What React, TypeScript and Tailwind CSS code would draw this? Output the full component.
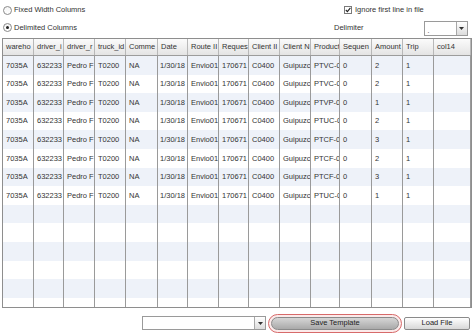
import React from 'react';

const columns = [
  { name: 'wareho', w: 31 },
  { name: 'driver_i', w: 30 },
  { name: 'driver_r', w: 31 },
  { name: 'truck_id', w: 31 },
  { name: 'Comme', w: 32 },
  { name: 'Date', w: 30 },
  { name: 'Route II', w: 31 },
  { name: 'Reques', w: 30 },
  { name: 'Client II', w: 31 },
  { name: 'Client N', w: 31 },
  { name: 'Product', w: 29 },
  { name: 'Sequen', w: 32 },
  { name: 'Amount', w: 31 },
  { name: 'Trip', w: 31 },
  { name: 'col14', w: 37 },
];

const products = [
  ['PTVC-0', '2'],
  ['PTVC-0', '2'],
  ['PTVP-0', '1'],
  ['PTUC-0', '2'],
  ['PTCF-0', '3'],
  ['PTCF-0', '2'],
  ['PTCF-0', '3'],
  ['PTUC-0', '1'],
];

const rows = products.map(([product, amount]) => [
  '7035A', '632233', 'Pedro F', 'T0200', 'NA', '1/30/18', 'Envio01', '170671',
  'C0400', 'Guipuzc', product, '0', amount, '1', '',
]);

function Radio({ checked }: { checked?: boolean }) {
  return (
    <span className="w-[9px] h-[9px] rounded-full border border-[#8a8a8a] bg-gradient-to-b from-[#f4f4f4] to-white flex items-center justify-center">
      {checked && <span className="w-[3px] h-[3px] rounded-full bg-[#222]" />}
    </span>
  );
}

function Arrow() {
  return (
    <span className="w-[11px] self-stretch border-l border-[#a8a8a8] bg-gradient-to-b from-white to-[#dcdcdc] flex items-center justify-center">
      <svg width="5" height="3" viewBox="0 0 5 3">
        <path d="M0 0 L5 0 L2.5 3 Z" fill="#333" />
      </svg>
    </span>
  );
}

export default function App() {
  const total = 15;

  return (
    <div className="w-[474px] h-[335px] bg-white overflow-hidden font-['Liberation_Sans',Arial,sans-serif] text-[7.5px] text-[#333] leading-none">
      <div className="flex items-center h-[16px] mt-[2px]">
        <div className="flex-1 flex items-center gap-[2px] pl-[3px]">
          <Radio />
          <span>Fixed Width Columns</span>
        </div>
        <div className="w-[130px] flex items-center gap-[3px]">
          <span className="w-[8px] h-[8px] border border-[#7a7a7a] bg-white flex items-center justify-center">
            <svg width="6" height="6" viewBox="0 0 6 6">
              <path d="M0.8 3 L2.4 4.6 L5.4 0.8" stroke="#222" strokeWidth="1.1" fill="none" />
            </svg>
          </span>
          <span>Ignore first line in file</span>
        </div>
      </div>

      <div className="flex items-center h-[19px]">
        <div className="flex-1 flex items-center gap-[2px] pl-[3px]">
          <Radio checked />
          <span>Delimited Columns</span>
        </div>
        <div className="w-[140px] flex items-start h-full">
          <span className="mt-[6px]">Delimiter</span>
          <div className="ml-[60px] mt-[3px] w-[44px] h-[15px] border border-[#9a9a9a] bg-white flex">
            <span className="flex-1 pl-[3px] pt-[5px] text-[7px]">.</span>
            <Arrow />
          </div>
        </div>
      </div>

      <div className="mx-[2px] mt-[1px] h-[270px] border border-[#8e8e8e] overflow-hidden">
        <div className="flex h-[17px] border-b border-[#9c9c9c] bg-gradient-to-b from-[#fbfbfb] to-[#e4e4e4]">
          {columns.map((c, i) => (
            <div
              key={i}
              style={{ width: c.w }}
              className="shrink-0 border-r border-[#b8b8b8] pl-[3px] flex items-center overflow-hidden whitespace-nowrap"
            >
              {c.name}
            </div>
          ))}
        </div>
        {Array.from({ length: total }).map((_, r) => (
          <div key={r} className={`flex h-[18.6px] ${r % 2 === 0 ? 'bg-[#eef2f9]' : 'bg-white'}`}>
            {columns.map((c, i) => (
              <div
                key={i}
                style={{ width: c.w }}
                className={`shrink-0 border-r border-[#9a9a9a] flex items-center overflow-hidden whitespace-nowrap ${
                  i === 5 ? 'justify-end pr-[2px]' : 'pl-[3px]'
                }`}
              >
                {rows[r] ? rows[r][i] : ''}
              </div>
            ))}
          </div>
        ))}
      </div>

      <div className="flex items-center h-[20px] mt-[5px]">
        <div className="ml-[142px] w-[124px] h-[14px] border border-[#9a9a9a] bg-white flex">
          <span className="flex-1" />
          <Arrow />
        </div>
        <div className="ml-[2px] w-[134px] h-[19px] rounded-full border-[1.5px] border-[#d76a6a] bg-[#fbeaea] flex items-center justify-center px-[2px]">
          <div className="w-full h-[13px] rounded-full border border-[#8a8a8a] bg-gradient-to-b from-[#d6d6d6] to-[#a9a9a9] flex items-center justify-center text-[7.5px] text-[#222]">
            Save Template
          </div>
        </div>
        <div className="ml-[2px] w-[66px] h-[13px] rounded-[2px] border border-[#8a8a8a] bg-gradient-to-b from-white to-[#d8d8d8] flex items-center justify-center text-[#222]">
          Load File
        </div>
      </div>
    </div>
  );
}
